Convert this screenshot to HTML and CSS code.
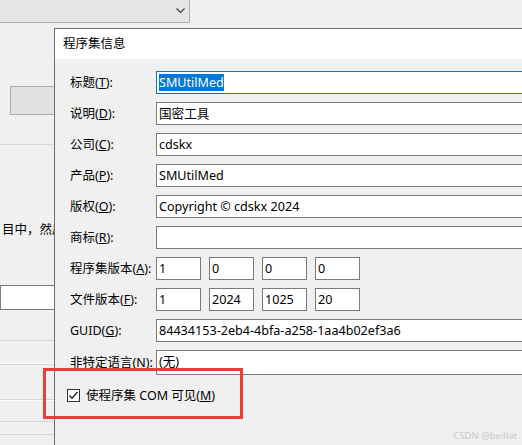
FILE: index.html
```html
<!DOCTYPE html>
<html lang="zh-CN">
<head>
<meta charset="utf-8">
<title>程序集信息</title>
<link rel="stylesheet" href="styles.css">
</head>
<body>
<div class="backwin">
  <div class="combo">
    <svg class="chev" width="9" height="6" viewBox="0 0 9 6"><polyline points="0.5,0.5 4.5,4.5 8.5,0.5" fill="none" stroke="#404040" stroke-width="1.2"/></svg>
  </div>
  <div class="bgbtn"></div>
  <div class="sep"></div>
  <div class="hint">目中，然后</div>
  <div class="bginput"></div>
  <div class="ln gray l1"></div>
  <div class="ln white l2"></div>
  <div class="ln gray"></div>
  <div class="ln gray l3"></div>
  <div class="ln white"></div>
  <div class="ln gray l4"></div>
  <div class="ln gray l5"></div>
</div>

<div class="dialog">
  <div class="title">程序集信息</div>
  <div class="body">
    <div class="row">
      <div class="lbl">标题(<u>T</u>):</div>
      <div class="field focus"><span class="sel">SMUtilMed</span></div>
    </div>
    <div class="row">
      <div class="lbl">说明(<u>D</u>):</div>
      <div class="field">国密工具</div>
    </div>
    <div class="row">
      <div class="lbl">公司(<u>C</u>):</div>
      <div class="field">cdskx</div>
    </div>
    <div class="row">
      <div class="lbl">产品(<u>P</u>):</div>
      <div class="field">SMUtilMed</div>
    </div>
    <div class="row">
      <div class="lbl">版权(<u>O</u>):</div>
      <div class="field">Copyright © cdskx 2024</div>
    </div>
    <div class="row">
      <div class="lbl">商标(<u>R</u>):</div>
      <div class="field"></div>
    </div>
    <div class="row">
      <div class="lbl">程序集版本(<u>A</u>):</div>
      <div class="vers">
        <div class="field small">1</div>
        <div class="field small">0</div>
        <div class="field small">0</div>
        <div class="field small">0</div>
      </div>
    </div>
    <div class="row">
      <div class="lbl">文件版本(<u>F</u>):</div>
      <div class="vers">
        <div class="field small">1</div>
        <div class="field small">2024</div>
        <div class="field small">1025</div>
        <div class="field small">20</div>
      </div>
    </div>
    <div class="row">
      <div class="lbl">GUID(<u>G</u>):</div>
      <div class="field">84434153-2eb4-4bfa-a258-1aa4b02ef3a6</div>
    </div>
    <div class="row tall">
      <div class="lbl">非特定语言(<u>N</u>):</div>
      <div class="field tallf">(无)</div>
    </div>
    <div class="chkrow">
      <span class="chk"><svg width="11" height="11" viewBox="0 0 11 11"><polyline points="1.5,5.5 4,8.2 9.5,2" fill="none" stroke="#222" stroke-width="1.3"/></svg></span>
      <span class="chklbl">使程序集 COM 可见(<u>M</u>)</span>
    </div>
  </div>
</div>

<div class="highlight"></div>
<div class="watermark">CSDN @beillat</div>
</body>
</html>
```
FILE: styles.css
```css
html, body {
  margin: 0;
  padding: 0;
}
body {
  width: 522px;
  height: 445px;
  overflow: hidden;
  position: relative;
  background: #f0f0f0;
  font-family: "Noto Sans", "Noto Sans CJK SC", sans-serif;
  font-size: 12px;
  color: #000;
}
u { text-decoration: underline; text-underline-offset: 1px; }

/* background window */
.backwin {
  display: flex;
  flex-direction: column;
}
.combo {
  width: 189px;
  height: 22px;
  background: #e5e5e5;
  border-right: 1px solid #adadad;
  border-bottom: 1px solid #adadad;
  position: relative;
}
.chev {
  position: absolute;
  left: 176px;
  top: 8px;
}
.bgbtn {
  margin: 63px 0 0 10px;
  width: 120px;
  height: 27px;
  border: 1px solid #adadad;
  background: #e1e1e1;
}
.sep {
  margin-top: 29px;
  height: 1px;
  width: 120px;
  background: #d9d9d9;
}
.hint {
  margin: 77px 0 0 2px;
  line-height: 16px;
  font-size: 12.5px;
  white-space: nowrap;
}
.bginput {
  margin-top: 47px;
  width: 120px;
  height: 23px;
  border: 1px solid #7a7a7a;
  background: #fff;
}
.ln { height: 1px; width: 120px; }
.ln.gray { background: #d6d6d6; }
.ln.white { background: #ffffff; }
.l1 { margin-top: 30px; }
.l2 { margin-top: 22px; }
.l3 { margin-top: 34px; }
.l4 { margin-top: 20px; }
.l5 { margin-top: 12px; }

/* dialog */
.dialog {
  position: absolute;
  left: 54px;
  top: 28px;
  width: 520px;
  height: 430px;
  border: 1px solid #6e6e6e;
  background: #f0f0f0;
}
.title {
  height: 30px;
  line-height: 29px;
  background: #fff;
  padding-left: 8px;
  font-size: 12.5px;
}
.body {
  padding: 12px 0 0 15px;
  display: flex;
  flex-direction: column;
  gap: 8px;
}
.row {
  display: flex;
  align-items: center;
  height: 23px;
}
.row.tall { height: 25px; }
.lbl {
  width: 86px;
  flex: none;
  white-space: nowrap;
  line-height: 16px;
  font-size: 12.5px;
}
.field {
  box-sizing: border-box;
  width: 420px;
  height: 23px;
  line-height: 21px;
  border: 1px solid #7a7a7a;
  background: #fff;
  padding: 0 2px;
  white-space: nowrap;
  overflow: hidden;
  font-size: 12.6px;
}
.field.tallf { height: 25px; line-height: 22px; }
.field.focus { border-color: #0078d7; }
.sel {
  display: inline-block;
  background: #0078d7;
  color: #fff;
  line-height: 17px;
  vertical-align: middle;
  margin-top: -2px;
}
.vers {
  display: flex;
  gap: 8px;
}
.field.small { width: 45px; }
.chkrow {
  margin: 6px 0 0 -3px;
  display: flex;
  align-items: center;
  height: 13px;
}
.chk {
  box-sizing: border-box;
  width: 13px;
  height: 13px;
  border: 1px solid #333;
  background: #fff;
  display: flex;
  align-items: center;
  justify-content: center;
}
.chklbl {
  margin-left: 6px;
  line-height: 16px;
  white-space: nowrap;
  font-size: 12.5px;
}

.highlight {
  position: absolute;
  left: 43px;
  top: 368px;
  width: 200px;
  height: 51px;
  box-sizing: border-box;
  border: 3px solid #ef3b3b;
}
.watermark {
  position: absolute;
  right: 5px;
  bottom: 3px;
  font-size: 9.5px;
  color: #c9c9c9;
  white-space: nowrap;
}
```
